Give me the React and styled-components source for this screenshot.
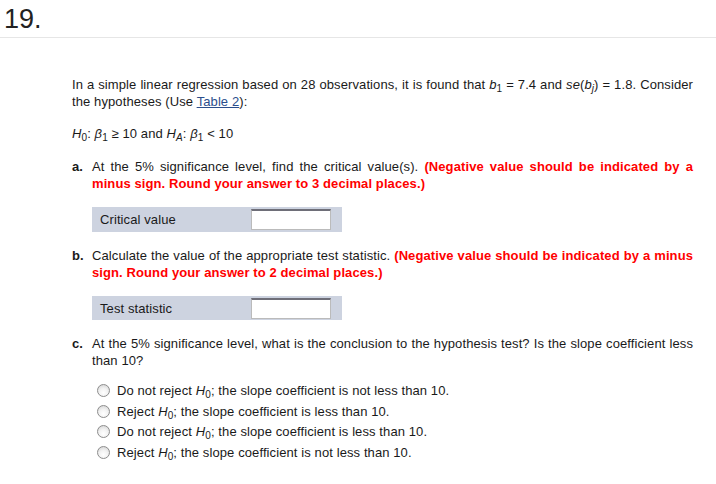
import React from "react"
import styled, { createGlobalStyle } from "styled-components"

const Global = createGlobalStyle`
    body {
        margin: 0;
        background: #fff;
        font-family: "Liberation Sans", Arial, sans-serif;
        color: #1a1a1a;
    }
`

const Page = styled.div`
    width: 716px;
    height: 484px;
    overflow: hidden;
`

const Header = styled.div`
    height: 38px;
    border-bottom: 1px solid #e6e6e6;
    padding-left: 4px;
    box-sizing: border-box;
`

const Number = styled.h1`
    margin: 0;
    padding-top: 4px;
    font-size: 27px;
    font-weight: normal;
    line-height: 30px;
    color: #222;
`

const Body = styled.div`
    padding: 38px 23px 0 72px;
    font-size: 13px;
    line-height: 17px;
    letter-spacing: 0.1px;
`

const Para = styled.p`
    margin: 0 0 ${p => p.$gap || 15}px 0;
    text-align: justify;
`

const Link = styled.a`
    color: #2b4e8c;
    text-decoration: underline;
`

const Sub = styled.sub`
    font-size: 10px;
    vertical-align: -3px;
    line-height: 0;
`

const Part = styled.div`
    display: flex;
    margin-bottom: ${p => p.$gap || 15}px;
`

const Letter = styled.b`
    width: 20px;
    flex-shrink: 0;
`

const PartText = styled.div`
    flex: 1;
    text-align: justify;
`

const Note = styled.b`
    color: #ff0000;
`

const AnswerRow = styled.div`
    margin: 0 0 15px 20px;
    width: 250px;
    height: ${p => p.$h}px;
    background: #cdd3e0;
    display: flex;
    align-items: center;
    justify-content: space-between;
    padding: 0 11px 0 8px;
    box-sizing: border-box;
`

const Field = styled.div`
    width: 80px;
    height: 21px;
    background: #fff;
    border: 1px solid #bbb;
    border-top: 2px solid #6e6e78;
    box-sizing: border-box;
`

const Options = styled.div`
    margin: 0 0 0 25px;
    display: flex;
    flex-direction: column;
`

const Option = styled.label`
    display: flex;
    align-items: center;
    height: 20.7px;
`

const Radio = styled.span`
    width: 13px;
    height: 13px;
    border-radius: 50%;
    border: 1px solid #8d8d8d;
    background: radial-gradient(circle at 50% 70%, #ffffff 0%, #f2f2f2 45%, #cfcfcf 100%);
    box-sizing: border-box;
    margin-right: 7px;
    flex-shrink: 0;
`

const H0 = () => (
    <>
        <i>H</i>
        <Sub>0</Sub>
    </>
)

const options = [
    "Do not reject", "the slope coefficient is not less than 10.",
    "Reject", "the slope coefficient is less than 10.",
    "Do not reject", "the slope coefficient is less than 10.",
    "Reject", "the slope coefficient is not less than 10.",
]

export default function App() {
    const rows = []
    for (let i = 0; i < options.length; i += 2) rows.push([options[i], options[i + 1]])

    return (
        <Page>
            <Global />
            <Header>
                <Number>19.</Number>
            </Header>
            <Body>
                <Para>
                    In a simple linear regression based on 28 observations, it is found that <i>b</i>
                    <Sub>1</Sub> = 7.4 and <i>se</i>(<i>b</i><Sub><i>j</i></Sub>) = 1.8. Consider the hypotheses (Use{" "}
                    <Link href="#">Table 2</Link>):
                </Para>
                <Para $gap={16}>
                    <H0 />: <i>β</i>
                    <Sub>1</Sub> ≥ 10 and <i>H</i>
                    <Sub><i>A</i></Sub>: <i>β</i>
                    <Sub>1</Sub> &lt; 10
                </Para>

                <Part>
                    <Letter>a.</Letter>
                    <PartText>
                        At the 5% significance level, find the critical value(s).{" "}
                        <Note>(Negative value should be indicated by a minus sign. Round your answer to 3 decimal places.)</Note>
                    </PartText>
                </Part>
                <AnswerRow $h={25}>
                    Critical value
                    <Field />
                </AnswerRow>

                <Part>
                    <Letter>b.</Letter>
                    <PartText>
                        Calculate the value of the appropriate test statistic.{" "}
                        <Note>(Negative value should be indicated by a minus sign. Round your answer to 2 decimal places.)</Note>
                    </PartText>
                </Part>
                <AnswerRow $h={24}>
                    Test statistic
                    <Field />
                </AnswerRow>

                <Part $gap={11}>
                    <Letter>c.</Letter>
                    <PartText>
                        At the 5% significance level, what is the conclusion to the hypothesis test? Is the slope coefficient less than 10?
                    </PartText>
                </Part>
                <Options>
                    {rows.map(([verb, rest], i) => (
                        <Option key={i}>
                            <Radio />
                            <span>
                                {verb} <H0 />; {rest}
                            </span>
                        </Option>
                    ))}
                </Options>
            </Body>
        </Page>
    )
}
